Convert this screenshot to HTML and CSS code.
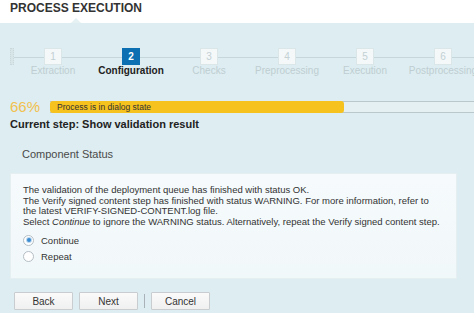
FILE: index.html
```html
<!DOCTYPE html>
<html lang="en">
<head>
  <meta charset="UTF-8" />
  <meta name="viewport" content="width=device-width, initial-scale=1.0"/>
  <title>Process Execution</title>
  <link rel="stylesheet" href="styles.css">
</head>
<body>

  <header class="page-header">
    <h1 class="page-title">PROCESS EXECUTION</h1>
  </header>

  <main class="process-body">
    <div class="steps">
      <span class="steps-handle"></span>
      <div class="step"><span class="step-num">1</span><span class="step-label">Extraction</span></div>
      <div class="step active"><span class="step-num">2</span><span class="step-label">Configuration</span></div>
      <div class="step"><span class="step-num">3</span><span class="step-label">Checks</span></div>
      <div class="step"><span class="step-num">4</span><span class="step-label">Preprocessing</span></div>
      <div class="step"><span class="step-num">5</span><span class="step-label">Execution</span></div>
      <div class="step"><span class="step-num">6</span><span class="step-label">Postprocessing</span></div>
    </div>

    <div class="progress-row">
      <span class="progress-pct">66%</span>
      <div class="progress-bar">
        <div class="progress-fill" style="width: 294px;">Process is in dialog state</div>
      </div>
    </div>

    <h2 class="current-step">Current step: Show validation result</h2>

    <h3 class="section-title">Component Status</h3>
    <section class="status-panel">
      <p class="status-text">
        The validation of the deployment queue has finished with status OK.<br>
        The Verify signed content step has finished with status WARNING. For more information, refer to
        the latest VERIFY-SIGNED-CONTENT.log file.<br>
        Select <em>Continue</em> to ignore the WARNING status. Alternatively, repeat the Verify signed content step.
      </p>
      <label class="radio-row"><span class="radio checked"></span>Continue</label>
      <label class="radio-row"><span class="radio"></span>Repeat</label>
    </section>

    <div class="actions">
      <button class="btn">Back</button>
      <button class="btn">Next</button>
      <span class="actions-sep"></span>
      <button class="btn">Cancel</button>
    </div>
  </main>

</body>
</html>
```

FILE: styles.css
```css
html, body {
  height: 100%;
}

body {
  font-family: 'Liberation Sans', Arial, sans-serif;
  margin: 0;
  padding: 0;
  color: #333;
  background: #ddedf1;
  display: flex;
  flex-direction: column;
  overflow: hidden;
}

.page-header {
  position: relative;
  height: 23px;
  background: #fff;
  padding-left: 10px;
}

.page-header::after {
  content: "";
  position: absolute;
  left: 71px;
  bottom: 0;
  border-left: 5px solid transparent;
  border-right: 5px solid transparent;
  border-bottom: 5px solid #e6f1f4;
}

.page-title {
  margin: 0;
  font-size: 12px;
  line-height: 16px;
  font-weight: bold;
  color: #333;
}

.process-body {
  flex: 1;
  padding: 25px 0 0 10px;
  min-width: 0;
}

/* step indicator */
.steps {
  display: flex;
  align-items: flex-start;
  overflow: hidden;
  background: linear-gradient(#c6d7dc, #c6d7dc) no-repeat 4px 9px / 100% 1px;
}

.steps-handle {
  flex-shrink: 0;
  width: 2px;
  height: 15px;
  border: 1px dotted #c9d8dc;
  background: #d8e5e8;
}

.step {
  flex-shrink: 0;
  width: 78px;
  display: flex;
  flex-direction: column;
  align-items: center;
}

.step-num {
  box-sizing: border-box;
  width: 18px;
  height: 17px;
  border: 1px solid #dbe6e9;
  background: #f4f8f9;
  color: #c3d0d4;
  font-size: 10px;
  line-height: 15px;
  text-align: center;
}

.step-label {
  font-size: 10px;
  line-height: 12px;
  color: #bfcdd1;
  white-space: nowrap;
}

.step.active .step-num {
  background: #0b6fb1;
  border-color: #0b6fb1;
  color: #fff;
  font-weight: bold;
}

.step.active .step-label {
  color: #222;
  font-weight: bold;
}

/* progress */
.progress-row {
  display: flex;
  align-items: center;
  height: 14px;
  margin-top: 23px;
}

.progress-pct {
  width: 40px;
  font-size: 15px;
  line-height: 14px;
  color: #f2c14e;
}

.progress-bar {
  flex: 1;
  height: 12px;
  box-sizing: border-box;
  background: #e5f0f3;
  border-top: 1px solid #bac8cc;
  border-bottom: 1px solid #bac8cc;
  display: flex;
  align-items: center;
}

.progress-fill {
  height: 12px;
  background: #f6c21d;
  border-radius: 3px;
  font-size: 8.5px;
  line-height: 12px;
  color: #333;
  padding-left: 7px;
  box-sizing: border-box;
  white-space: nowrap;
}

.current-step {
  margin: 4px 0 0;
  font-size: 11px;
  line-height: 13px;
  font-weight: bold;
  color: #222;
}

.section-title {
  margin: 17px 0 0 12px;
  font-size: 11px;
  line-height: 13px;
  font-weight: normal;
  color: #4a4a4a;
}

/* status panel */
.status-panel {
  margin: 12px 17px 0 0;
  height: 106px;
  box-sizing: border-box;
  padding: 11px 12px 0;
  background: linear-gradient(#f6fafc, #f1f8f9);
  border: 1px solid #e5eef1;
}

.status-text {
  margin: 0 0 5px;
  font-size: 9.5px;
  line-height: 10.5px;
  color: #333;
}

.radio-row {
  display: flex;
  align-items: center;
  height: 16px;
  font-size: 9.5px;
  color: #333;
}

.radio {
  box-sizing: border-box;
  width: 11px;
  height: 11px;
  margin: 0 7px 0 0;
  border: 1px solid #b4bec5;
  border-radius: 50%;
  background: #fff;
  display: flex;
  align-items: center;
  justify-content: center;
}

.radio.checked::after {
  content: "";
  width: 4px;
  height: 4px;
  border-radius: 50%;
  background: #3b8bd0;
  box-shadow: 0 0 0 1px #bcd8ef;
}

/* buttons */
.actions {
  display: flex;
  align-items: center;
  gap: 6px;
  margin: 13px 0 0 4px;
}

.btn {
  width: 59px;
  height: 18px;
  padding: 0;
  font-family: inherit;
  font-size: 10px;
  color: #333;
  background: linear-gradient(#fafafa, #f0f0f0);
  border: 1px solid #c9cdd0;
  border-radius: 1px;
}

.actions-sep {
  width: 1px;
  height: 14px;
  background: #a9b3b7;
}
```
